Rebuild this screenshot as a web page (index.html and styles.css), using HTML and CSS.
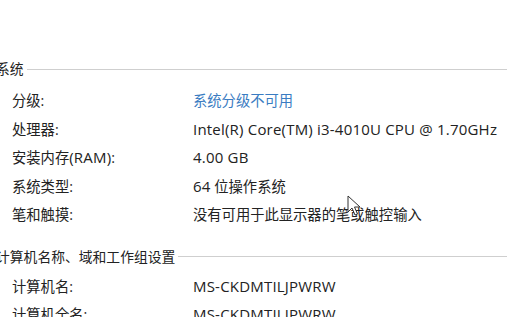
FILE: index.html
```html
<!DOCTYPE html>
<html lang="zh-CN">
<head>
<meta charset="utf-8">
<title>系统</title>
<link rel="stylesheet" href="styles.css">
</head>
<body>
<div class="page">
  <section class="group group-system">
    <div class="group-head"><span class="group-title">系统</span><span class="rule"></span></div>
    <div class="rows">
      <div class="label">分级:</div><div class="value link">系统分级不可用</div>
      <div class="label">处理器:</div><div class="value"><span class="latin">Intel(R) Core(TM) i3-4010U CPU @ 1.70GHz</span></div>
      <div class="label">安装内存<span class="latin">(RAM)</span>:</div><div class="value"><span class="latin">4.00 GB</span></div>
      <div class="label">系统类型:</div><div class="value"><span class="latin">64</span> 位操作系统</div>
      <div class="label">笔和触摸:</div><div class="value">没有可用于此显示器的笔或触控输入</div>
    </div>
  </section>
  <section class="group group-computer">
    <div class="group-head"><span class="group-title">计算机名称、域和工作组设置</span><span class="rule"></span></div>
    <div class="rows">
      <div class="label">计算机名:</div><div class="value"><span class="latin">MS-CKDMTILJPWRW</span></div>
      <div class="label">计算机全名:</div><div class="value"><span class="latin">MS-CKDMTILJPWRW</span></div>
    </div>
  </section>
  <svg class="cursor" width="14" height="22" viewBox="0 0 14 22" aria-hidden="true">
    <path d="M1 1 L1 17 L5 13 L8 20 L10.5 19 L7.5 12 L13 12 Z" fill="#fff" stroke="#333" stroke-width="1" stroke-linejoin="round"/>
  </svg>
</div>
</body>
</html>
```
FILE: styles.css
```css
html, body {
  margin: 0;
  padding: 0;
  background: #ffffff;
}
.page {
  position: relative;
  width: 507px;
  height: 317px;
  overflow: hidden;
  padding-top: 58px;
  box-sizing: border-box;
  font-family: "Open Sans", "Noto Sans CJK SC", sans-serif;
  font-size: 14.3px;
  color: #222222;
}
.latin {
  font-family: "Open Sans", sans-serif;
  font-size: 15px;
  letter-spacing: 0.2px;
  line-height: 1;
}
.group-head {
  display: flex;
  align-items: center;
  margin-left: -4px;
  height: 20px;
  gap: 3px;
}
.group-title {
  font-family: "Noto Sans CJK SC", sans-serif;
  font-size: 13.8px;
  white-space: nowrap;
}
.rule {
  flex: 1;
  height: 1px;
  background: #cfcfcf;
  margin-top: 2px;
}
.rows {
  display: grid;
  grid-template-columns: 181px 1fr;
  grid-auto-rows: 28.5px;
  padding-left: 12px;
  margin-top: 9px;
  line-height: 28.5px;
}
.label, .value {
  white-space: nowrap;
}
.link {
  color: #3a7cc2;
}
.group-computer {
  margin-top: 16px;
}
.group-computer .rows {
  margin-top: 7px;
}
.cursor {
  position: absolute;
  left: 347px;
  top: 195px;
}
```
